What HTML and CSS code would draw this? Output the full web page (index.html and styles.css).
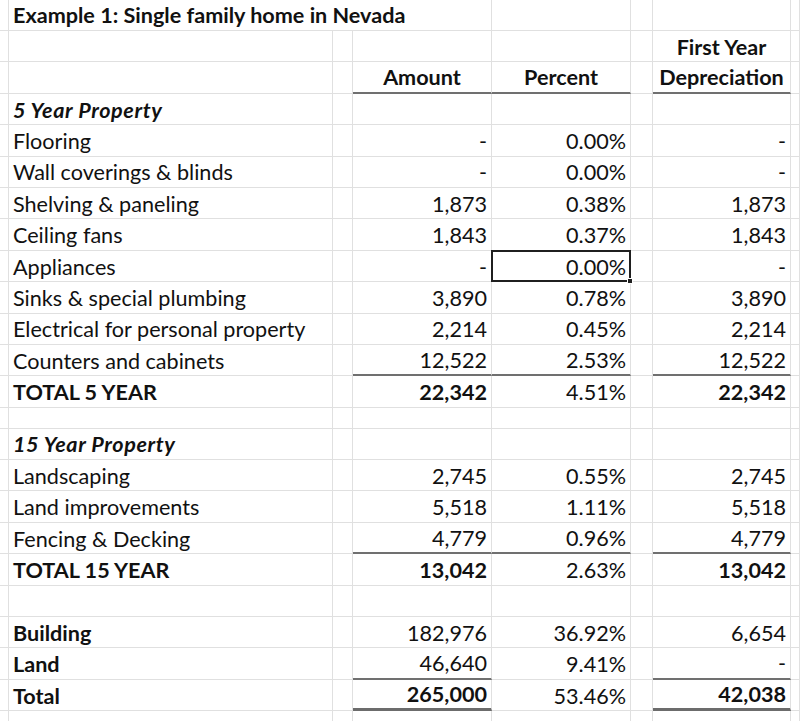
FILE: index.html
```html
<!DOCTYPE html>
<html lang="en">
<head>
    <meta charset="UTF-8">
    <title>Example 1: Single family home in Nevada</title>
    <link rel="stylesheet" href="styles.css">
</head>
<body>
<div class="sheet">
    <!-- title row, the text runs over columns B to D -->
    <div class="row top">
        <div class="cell"></div>
        <div class="cell bold span3">Example 1: Single family home in Nevada</div>
        <div class="cell"></div>
        <div class="cell"></div>
        <div class="cell"></div>
        <div class="cell"></div>
    </div>

    <!-- column headers -->
    <div class="row">
        <div class="cell"></div><div class="cell"></div><div class="cell"></div>
        <div class="cell"></div><div class="cell"></div><div class="cell"></div>
        <div class="cell head">First Year</div>
        <div class="cell"></div>
    </div>
    <div class="row">
        <div class="cell"></div><div class="cell"></div><div class="cell"></div>
        <div class="cell head rule">Amount</div>
        <div class="cell head rule">Percent</div>
        <div class="cell"></div>
        <div class="cell head rule">Depreciation</div>
        <div class="cell"></div>
    </div>

    <!-- 5 year property -->
    <div class="row">
        <div class="cell"></div>
        <div class="cell bold italic">5 Year Property</div>
        <div class="cell"></div><div class="cell"></div><div class="cell"></div>
        <div class="cell"></div><div class="cell"></div><div class="cell"></div>
    </div>
    <div class="row">
        <div class="cell"></div>
        <div class="cell">Flooring</div>
        <div class="cell"></div>
        <div class="cell num">-</div>
        <div class="cell num">0.00%</div>
        <div class="cell"></div>
        <div class="cell num">-</div>
        <div class="cell"></div>
    </div>
    <div class="row">
        <div class="cell"></div>
        <div class="cell">Wall coverings &amp; blinds</div>
        <div class="cell"></div>
        <div class="cell num">-</div>
        <div class="cell num">0.00%</div>
        <div class="cell"></div>
        <div class="cell num">-</div>
        <div class="cell"></div>
    </div>
    <div class="row">
        <div class="cell"></div>
        <div class="cell">Shelving &amp; paneling</div>
        <div class="cell"></div>
        <div class="cell num">1,873</div>
        <div class="cell num">0.38%</div>
        <div class="cell"></div>
        <div class="cell num">1,873</div>
        <div class="cell"></div>
    </div>
    <div class="row">
        <div class="cell"></div>
        <div class="cell">Ceiling fans</div>
        <div class="cell"></div>
        <div class="cell num">1,843</div>
        <div class="cell num">0.37%</div>
        <div class="cell"></div>
        <div class="cell num">1,843</div>
        <div class="cell"></div>
    </div>
    <div class="row">
        <div class="cell"></div>
        <div class="cell">Appliances</div>
        <div class="cell"></div>
        <div class="cell num">-</div>
        <div class="cell num selected">0.00%</div>
        <div class="cell"></div>
        <div class="cell num">-</div>
        <div class="cell"></div>
    </div>
    <div class="row">
        <div class="cell"></div>
        <div class="cell">Sinks &amp; special plumbing</div>
        <div class="cell"></div>
        <div class="cell num">3,890</div>
        <div class="cell num">0.78%</div>
        <div class="cell"></div>
        <div class="cell num">3,890</div>
        <div class="cell"></div>
    </div>
    <div class="row">
        <div class="cell"></div>
        <div class="cell">Electrical for personal property</div>
        <div class="cell"></div>
        <div class="cell num">2,214</div>
        <div class="cell num">0.45%</div>
        <div class="cell"></div>
        <div class="cell num">2,214</div>
        <div class="cell"></div>
    </div>
    <div class="row">
        <div class="cell"></div>
        <div class="cell">Counters and cabinets</div>
        <div class="cell"></div>
        <div class="cell num rule">12,522</div>
        <div class="cell num rule">2.53%</div>
        <div class="cell"></div>
        <div class="cell num rule">12,522</div>
        <div class="cell"></div>
    </div>
    <div class="row">
        <div class="cell"></div>
        <div class="cell bold">TOTAL 5 YEAR</div>
        <div class="cell"></div>
        <div class="cell num bold">22,342</div>
        <div class="cell num">4.51%</div>
        <div class="cell"></div>
        <div class="cell num bold">22,342</div>
        <div class="cell"></div>
    </div>
    <div class="row short">
        <div class="cell"></div><div class="cell"></div><div class="cell"></div>
        <div class="cell"></div><div class="cell"></div><div class="cell"></div>
        <div class="cell"></div><div class="cell"></div>
    </div>

    <!-- 15 year property -->
    <div class="row">
        <div class="cell"></div>
        <div class="cell bold italic">15 Year Property</div>
        <div class="cell"></div><div class="cell"></div><div class="cell"></div>
        <div class="cell"></div><div class="cell"></div><div class="cell"></div>
    </div>
    <div class="row">
        <div class="cell"></div>
        <div class="cell">Landscaping</div>
        <div class="cell"></div>
        <div class="cell num">2,745</div>
        <div class="cell num">0.55%</div>
        <div class="cell"></div>
        <div class="cell num">2,745</div>
        <div class="cell"></div>
    </div>
    <div class="row">
        <div class="cell"></div>
        <div class="cell">Land improvements</div>
        <div class="cell"></div>
        <div class="cell num">5,518</div>
        <div class="cell num">1.11%</div>
        <div class="cell"></div>
        <div class="cell num">5,518</div>
        <div class="cell"></div>
    </div>
    <div class="row">
        <div class="cell"></div>
        <div class="cell">Fencing &amp; Decking</div>
        <div class="cell"></div>
        <div class="cell num rule">4,779</div>
        <div class="cell num rule">0.96%</div>
        <div class="cell"></div>
        <div class="cell num rule">4,779</div>
        <div class="cell"></div>
    </div>
    <div class="row">
        <div class="cell"></div>
        <div class="cell bold">TOTAL 15 YEAR</div>
        <div class="cell"></div>
        <div class="cell num bold">13,042</div>
        <div class="cell num">2.63%</div>
        <div class="cell"></div>
        <div class="cell num bold">13,042</div>
        <div class="cell"></div>
    </div>
    <div class="row">
        <div class="cell"></div><div class="cell"></div><div class="cell"></div>
        <div class="cell"></div><div class="cell"></div><div class="cell"></div>
        <div class="cell"></div><div class="cell"></div>
    </div>

    <!-- building, land and total -->
    <div class="row">
        <div class="cell"></div>
        <div class="cell bold">Building</div>
        <div class="cell"></div>
        <div class="cell num">182,976</div>
        <div class="cell num">36.92%</div>
        <div class="cell"></div>
        <div class="cell num">6,654</div>
        <div class="cell"></div>
    </div>
    <div class="row">
        <div class="cell"></div>
        <div class="cell bold">Land</div>
        <div class="cell"></div>
        <div class="cell num rule">46,640</div>
        <div class="cell num">9.41%</div>
        <div class="cell"></div>
        <div class="cell num rule">-</div>
        <div class="cell"></div>
    </div>
    <div class="row">
        <div class="cell"></div>
        <div class="cell bold">Total</div>
        <div class="cell"></div>
        <div class="cell num bold double">265,000</div>
        <div class="cell num">53.46%</div>
        <div class="cell"></div>
        <div class="cell num bold double">42,038</div>
        <div class="cell"></div>
    </div>
    <div class="row">
        <div class="cell"></div><div class="cell"></div><div class="cell"></div>
        <div class="cell"></div><div class="cell"></div><div class="cell"></div>
        <div class="cell"></div><div class="cell"></div>
    </div>
</div>
</body>
</html>
```

FILE: styles.css
```css
/*Page*/
body {
    margin: 0;
    padding: 0;
    background-color: #ffffff;
    color: #111111;
    font-family: Lato, "Open Sans", "DejaVu Sans", sans-serif;
    overflow: hidden;
}

.sheet {
    width: 800px;
}

/*Rows*/
.row {
    display: grid;
    grid-template-columns: 9px 324px 20px 139px 139px 22px 138px 1fr;
    height: 31.4px;
}

.row.top {
    height: 31px;
}

.row.short {
    height: 21px;
}

/*Cells*/
.cell {
    box-sizing: border-box;
    position: relative;
    display: flex;
    align-items: flex-end;
    padding: 0 4px 3px 4px;
    border-right: 1px solid #e0e0e0;
    border-bottom: 1px solid #e0e0e0;
    font-size: 21.6px;
    line-height: 1;
    white-space: nowrap;
}

.span3 {
    grid-column: span 3;
}

.num {
    justify-content: flex-end;
}

.head {
    justify-content: center;
    font-weight: 700;
}

.bold {
    font-weight: 700;
}

.italic {
    font-style: italic;
    letter-spacing: 0.6px;
}

/*Borders*/
.rule {
    border-bottom: 2px solid #707070;
}

.double {
    border-bottom: 3px solid #6c6c6c;
}

.selected::after {
    content: "";
    position: absolute;
    top: -1px;
    left: -1px;
    right: -1px;
    bottom: -1px;
    border: 2px solid #1f1f1f;
}

.selected::before {
    content: "";
    position: absolute;
    right: -3px;
    bottom: -3px;
    width: 4px;
    height: 4px;
    background-color: #1f1f1f;
    border: 1px solid #ffffff;
    z-index: 1;
}
```
